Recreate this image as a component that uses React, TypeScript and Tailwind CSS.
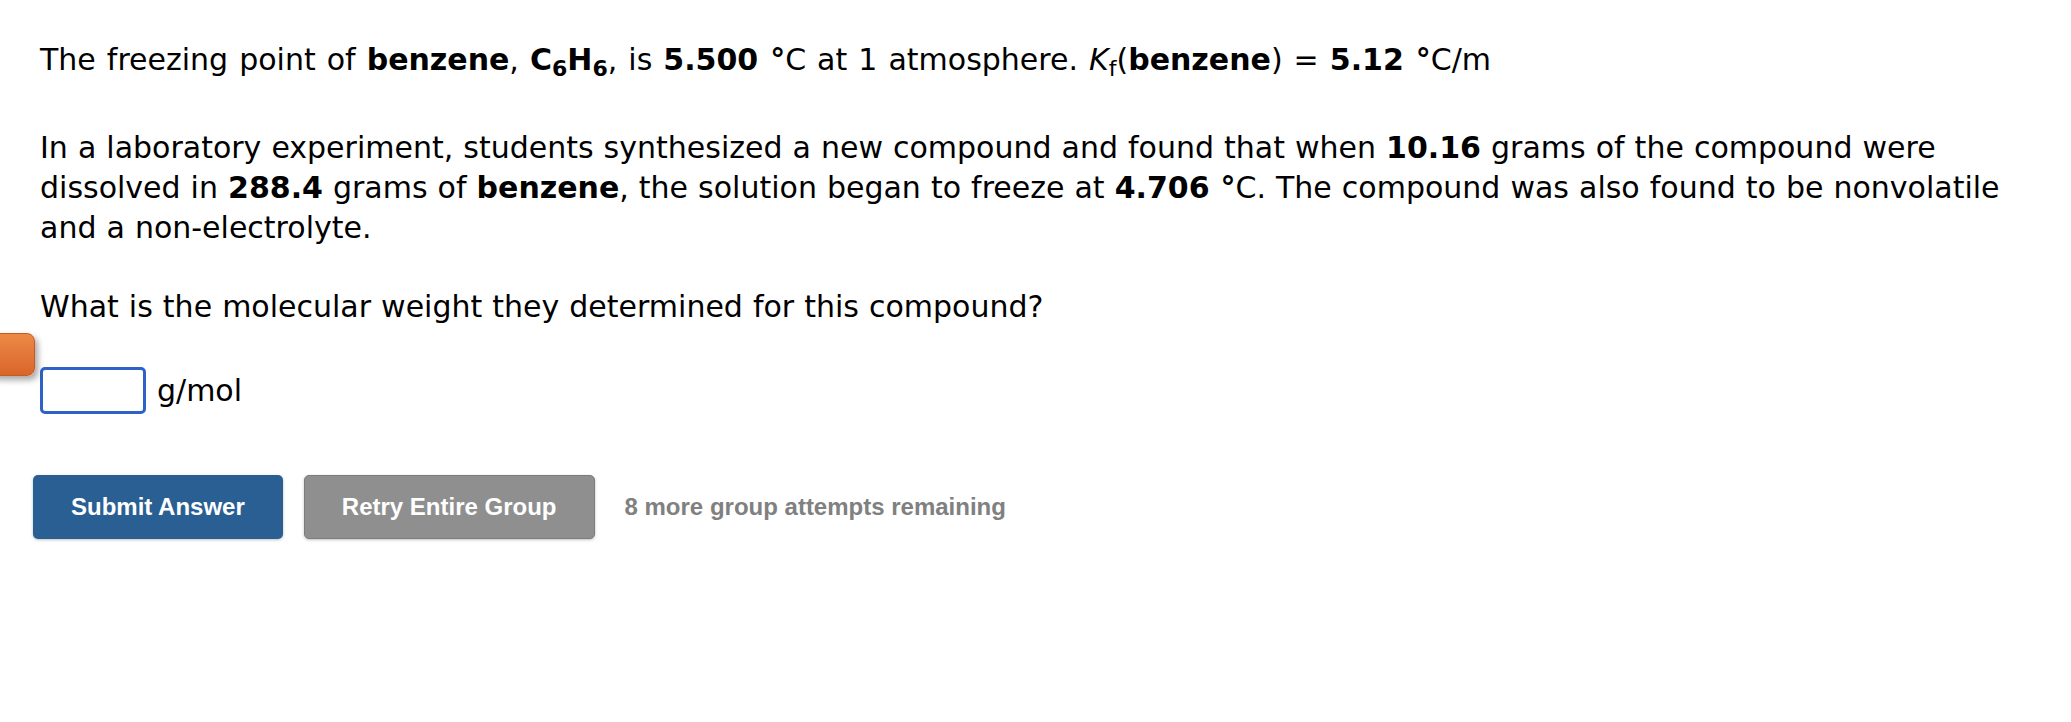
import type { ReactNode } from "react";

function B({ children }: { children: ReactNode }) {
  return <strong className="font-bold">{children}</strong>;
}

export default function App() {
  return (
    <div className="relative min-h-[722px] w-full bg-white text-black">
      {/* orange side tab */}
      <div className="absolute left-[-12px] top-[333px] h-[43px] w-[47px] rounded-[8px] border border-[#c9591f] bg-gradient-to-b from-[#ec8a45] to-[#d9652a] shadow-[3px_4px_6px_rgba(0,0,0,0.35)]" />

      <div className="pl-[40px] pt-[40px] font-['DejaVu_Sans','Verdana',sans-serif] text-[30px] leading-[40px] [word-spacing:0.5px]">
        <p className="[word-spacing:1.5px]">
          The freezing point of <B>benzene</B>,{" "}
          <B>
            C<sub className="text-[22px]">6</sub>H<sub className="text-[22px]">6</sub>
          </B>
          , is <B>5.500 °</B>C at 1 atmosphere. <i>K</i>
          <sub className="text-[22px]">f</sub>(<B>benzene</B>) = <B>5.12 °</B>C/m
        </p>

        <p className="mt-[48px]">
          In a laboratory experiment, students synthesized a new compound and found that when{" "}
          <B>10.16</B> grams of the compound were
          <br />
          dissolved in <B>288.4</B> grams of <B>benzene</B>, the solution began to freeze at{" "}
          <B>4.706 °</B>C. The compound was also found to be nonvolatile
          <br />
          and a non-electrolyte.
        </p>

        <p className="mt-[39px]">What is the molecular weight they determined for this compound?</p>

        <div className="mt-[40px] flex items-center gap-[11px]">
          <input
            type="text"
            aria-label="answer"
            className="h-[47px] w-[106px] rounded-[5px] border-[3px] border-[#2f62c8] bg-white outline-none"
          />
          <span className="text-[30px]">g/mol</span>
        </div>
      </div>

      <div className="mt-[61px] flex items-center pl-[33px] font-['Liberation_Sans','Arial',sans-serif] text-[24px] font-bold">
        <button
          type="button"
          className="h-[64px] rounded-[5px] bg-[#2a5f93] px-[38px] text-white shadow-[0_1px_3px_rgba(0,0,0,0.25)]"
        >
          Submit Answer
        </button>
        <button
          type="button"
          className="ml-[21px] h-[64px] rounded-[5px] border border-[#7c7c7c] bg-[#8f8f8f] px-[37px] text-white shadow-[0_1px_3px_rgba(0,0,0,0.25)]"
        >
          Retry Entire Group
        </button>
        <span className="ml-[30px] text-[#808080]">8 more group attempts remaining</span>
      </div>
    </div>
  );
}
